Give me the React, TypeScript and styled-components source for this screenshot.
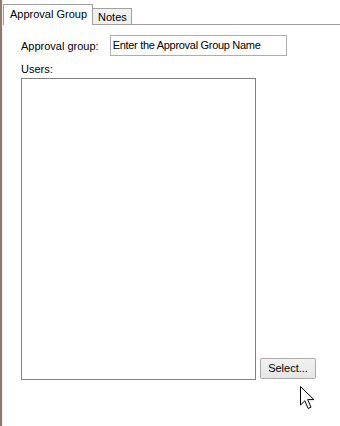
import React from 'react';
import styled, { createGlobalStyle } from 'styled-components';

const GlobalStyle = createGlobalStyle`
  html, body {
    margin: 0;
    padding: 0;
    background: #ffffff;
  }
  body {
    font-family: "Liberation Sans", Arial, sans-serif;
    font-size: 11px;
    color: #000000;
  }
`;

const Window = styled.div`
  position: relative;
  display: flex;
  width: 340px;
  height: 426px;
  overflow: hidden;
  background: #ffffff;
`;

const LeftEdge = styled.div`
  width: 3px;
  flex-shrink: 0;
  background: #8c7b72;
  border-right: 1px solid #f3efe9;
  box-sizing: border-box;
`;

const Main = styled.div`
  flex: 1;
  display: flex;
  flex-direction: column;
`;

const TabStrip = styled.div`
  display: flex;
  align-items: flex-end;
  height: 25px;
  padding-top: 4px;
  box-sizing: border-box;
`;

const Tab = styled.div<{ $active?: boolean }>`
  display: flex;
  align-items: center;
  box-sizing: border-box;
  height: ${(p) => (p.$active ? '21px' : '17px')};
  padding: ${(p) => (p.$active ? '0 5px 2px 6px' : '0 4px 0 5px')};
  background: ${(p) => (p.$active ? '#ffffff' : '#f0f0f0')};
  border: 1px solid #a0a0a0;
  border-bottom: ${(p) => (p.$active ? 'none' : '1px solid #a0a0a0')};
  border-left: ${(p) => (p.$active ? '1px solid #a0a0a0' : 'none')};
  white-space: nowrap;
`;

const TabFill = styled.div`
  flex: 1;
  border-bottom: 1px solid #a0a0a0;
`;

const Panel = styled.div`
  display: flex;
  flex-direction: column;
  padding: 10px 0 0 18px;
`;

const FieldRow = styled.div`
  display: flex;
  align-items: center;
  gap: 11px;
`;

const Label = styled.span`
  white-space: nowrap;
`;

const TextInput = styled.input`
  width: 177px;
  height: 21px;
  box-sizing: border-box;
  border: 1px solid #abadb3;
  padding: 0 3px 1px 2px;
  margin: 0;
  font: inherit;
  letter-spacing: -0.3px;
  color: #000000;
  outline: none;
  background: #ffffff;
`;

const UsersLabel = styled.div`
  margin-top: 6px;
  height: 15px;
  line-height: 15px;
`;

const UsersRow = styled.div`
  display: flex;
  align-items: flex-end;
  margin-top: 1px;
`;

const UserList = styled.div`
  width: 235px;
  height: 302px;
  box-sizing: border-box;
  border: 1px solid #828282;
  background: #ffffff;
`;

const SelectButton = styled.button`
  width: 56px;
  height: 21px;
  margin: 0 0 1px 4px;
  padding: 0 0 1px;
  box-sizing: border-box;
  border: 1px solid #acacac;
  border-radius: 2px;
  background: linear-gradient(#f2f2f2, #e5e5e5);
  font: inherit;
  color: #000000;
`;

const Cursor = styled.svg`
  position: absolute;
  left: 299px;
  top: 385px;
`;

export default function App() {
  return (
    <>
      <GlobalStyle />
      <Window>
        <LeftEdge />
        <Main>
          <TabStrip>
            <Tab $active>Approval Group</Tab>
            <Tab>Notes</Tab>
            <TabFill />
          </TabStrip>
          <Panel>
            <FieldRow>
              <Label>Approval group:</Label>
              <TextInput defaultValue="Enter the Approval Group Name" />
            </FieldRow>
            <UsersLabel>Users:</UsersLabel>
            <UsersRow>
              <UserList />
              <SelectButton>Select...</SelectButton>
            </UsersRow>
          </Panel>
        </Main>
        <Cursor width="18" height="26" viewBox="0 0 18 26">
          <path
            d="M1.5 1.5 L1.5 20 L5.8 15.8 L9.2 23.5 L12 22.2 L8.7 14.6 L14.8 14.6 Z"
            fill="#ffffff"
            stroke="#000000"
            strokeWidth="1"
            strokeLinejoin="miter"
          />
        </Cursor>
      </Window>
    </>
  );
}
